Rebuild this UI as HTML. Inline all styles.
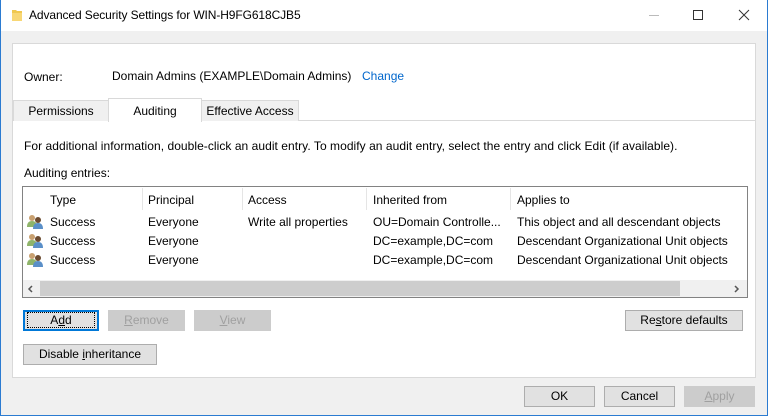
<!DOCTYPE html>
<html><head><meta charset="utf-8"><style>
*{margin:0;padding:0;box-sizing:border-box}
body{width:768px;height:416px;background:#f0f0f0;font-family:"Liberation Sans",sans-serif;font-size:12px;color:#000;position:relative;overflow:hidden}
.a{position:absolute;white-space:nowrap}
.btn{position:absolute;background:#e1e1e1;border:1px solid #adadad;text-align:center;line-height:18px;font-size:12px}
.dis{color:#a0a0a0;background:#cccccc;border-color:#cccccc}
u{text-decoration:underline}
</style></head><body>
<div class="a" style="left:0;top:0;width:768px;height:416px;border:1px solid #2b7bd1;border-top:none"></div>
<div class="a" style="left:1px;top:0;width:766px;height:31px;background:#fff"></div>
<svg class="a" style="left:11px;top:8px" width="12" height="14"><path d="M1 2h4l1 1h5v10H1z" fill="#f0c850"/><path d="M1 5h10v8H1z" fill="#f8d775"/></svg>
<div class="a" style="left:29px;top:8px;font-size:12px;letter-spacing:-0.1px">Advanced Security Settings for WIN-H9FG618CJB5</div>
<div class="a" style="left:649px;top:15px;width:10px;height:1px;background:#bbb"></div>
<div class="a" style="left:693px;top:10px;width:10px;height:10px;border:1px solid #333"></div>
<svg class="a" style="left:738px;top:9px" width="12" height="12"><path d="M1 1L11 11M11 1L1 11" stroke="#333" stroke-width="1"/></svg>
<div class="a" style="left:12px;top:43px;width:744px;height:335px;background:#fff;border:1px solid #d9d9d9"></div>
<div class="a" style="left:24px;top:70px">Owner:</div>
<div class="a" style="left:112px;top:69px">Domain Admins (EXAMPLE\Domain Admins)</div>
<div class="a" style="left:362px;top:69px;color:#0066cc">Change</div>
<div class="a" style="left:13px;top:120px;width:742px;height:1px;background:#d9d9d9"></div>
<div class="a" style="left:13px;top:100px;width:96px;height:21px;background:#f0f0f0;border:1px solid #d9d9d9;border-bottom:none;text-align:center;line-height:20px">Permissions</div>
<div class="a" style="left:108px;top:98px;width:94px;height:24px;background:#fff;border:1px solid #d9d9d9;border-bottom:none;text-align:center;line-height:24px">Auditing</div>
<div class="a" style="left:201px;top:100px;width:98px;height:21px;background:#f0f0f0;border:1px solid #d9d9d9;border-bottom:none;text-align:center;line-height:20px">Effective Access</div>
<div class="a" style="left:24px;top:139px;letter-spacing:0.05px">For additional information, double-click an audit entry. To modify an audit entry, select the entry and click Edit (if available).</div>
<div class="a" style="left:24px;top:166px">Auditing entries:</div>
<div class="a" style="left:22px;top:186px;width:726px;height:112px;border:1px solid #828282;background:#fff"></div>
<div class="a" style="left:142px;top:188px;width:1px;height:22px;background:#e5e5e5"></div>
<div class="a" style="left:242px;top:188px;width:1px;height:22px;background:#e5e5e5"></div>
<div class="a" style="left:366px;top:188px;width:1px;height:22px;background:#e5e5e5"></div>
<div class="a" style="left:510px;top:188px;width:1px;height:22px;background:#e5e5e5"></div>
<div class="a" style="left:50px;top:193px">Type</div>
<div class="a" style="left:148px;top:193px">Principal</div>
<div class="a" style="left:248px;top:193px">Access</div>
<div class="a" style="left:373px;top:193px">Inherited from</div>
<div class="a" style="left:517px;top:193px">Applies to</div>
<svg class="a" style="left:26px;top:214px" width="18" height="16"><circle cx="6" cy="4" r="3" fill="#c8a070"/><path d="M1 13q0-6 5-6t5 6z" fill="#8fb46a"/><circle cx="12" cy="6" r="3" fill="#6b4a2f"/><path d="M7 15q0-6 5-6t5 6z" fill="#5a8fc8"/></svg>
<svg class="a" style="left:26px;top:233px" width="18" height="16"><circle cx="6" cy="4" r="3" fill="#c8a070"/><path d="M1 13q0-6 5-6t5 6z" fill="#8fb46a"/><circle cx="12" cy="6" r="3" fill="#6b4a2f"/><path d="M7 15q0-6 5-6t5 6z" fill="#5a8fc8"/></svg>
<svg class="a" style="left:26px;top:252px" width="18" height="16"><circle cx="6" cy="4" r="3" fill="#c8a070"/><path d="M1 13q0-6 5-6t5 6z" fill="#8fb46a"/><circle cx="12" cy="6" r="3" fill="#6b4a2f"/><path d="M7 15q0-6 5-6t5 6z" fill="#5a8fc8"/></svg>
<div class="a" style="left:50px;top:215px">Success</div><div class="a" style="left:148px;top:215px">Everyone</div><div class="a" style="left:248px;top:215px">Write all properties</div><div class="a" style="left:373px;top:215px">OU=Domain Controlle...</div><div class="a" style="left:517px;top:215px">This object and all descendant objects</div>
<div class="a" style="left:50px;top:234px">Success</div><div class="a" style="left:148px;top:234px">Everyone</div><div class="a" style="left:373px;top:234px">DC=example,DC=com</div><div class="a" style="left:517px;top:234px">Descendant Organizational Unit objects</div>
<div class="a" style="left:50px;top:253px">Success</div><div class="a" style="left:148px;top:253px">Everyone</div><div class="a" style="left:373px;top:253px">DC=example,DC=com</div><div class="a" style="left:517px;top:253px">Descendant Organizational Unit objects</div>
<div class="a" style="left:23px;top:280px;width:724px;height:17px;background:#f0f0f0"></div>
<div class="a" style="left:40px;top:281px;width:640px;height:15px;background:#cdcdcd"></div>
<svg class="a" style="left:27px;top:284px" width="8" height="10"><path d="M5 2L2 5L5 8" stroke="#555" stroke-width="1.5" fill="none"/></svg>
<svg class="a" style="left:732px;top:284px" width="8" height="10"><path d="M3 2L6 5L3 8" stroke="#555" stroke-width="1.5" fill="none"/></svg>
<div class="btn" style="left:23px;top:310px;width:76px;height:21px;border:2px solid #0078d7;line-height:17px"><span style="border:1px dotted #000;padding:0 22px"><span>A<u>d</u>d</span></span></div>
<div class="btn dis" style="left:108px;top:310px;width:77px;height:21px"><u>R</u>emove</div>
<div class="btn dis" style="left:194px;top:310px;width:77px;height:21px"><u>V</u>iew</div>
<div class="btn" style="left:625px;top:310px;width:118px;height:21px">Re<u>s</u>tore defaults</div>
<div class="btn" style="left:23px;top:344px;width:134px;height:21px">Disable <u>i</u>nheritance</div>
<div class="btn" style="left:524px;top:386px;width:71px;height:21px">OK</div>
<div class="btn" style="left:604px;top:386px;width:71px;height:21px">Cancel</div>
<div class="btn dis" style="left:684px;top:386px;width:71px;height:21px"><u>A</u>pply</div>
</body></html>
